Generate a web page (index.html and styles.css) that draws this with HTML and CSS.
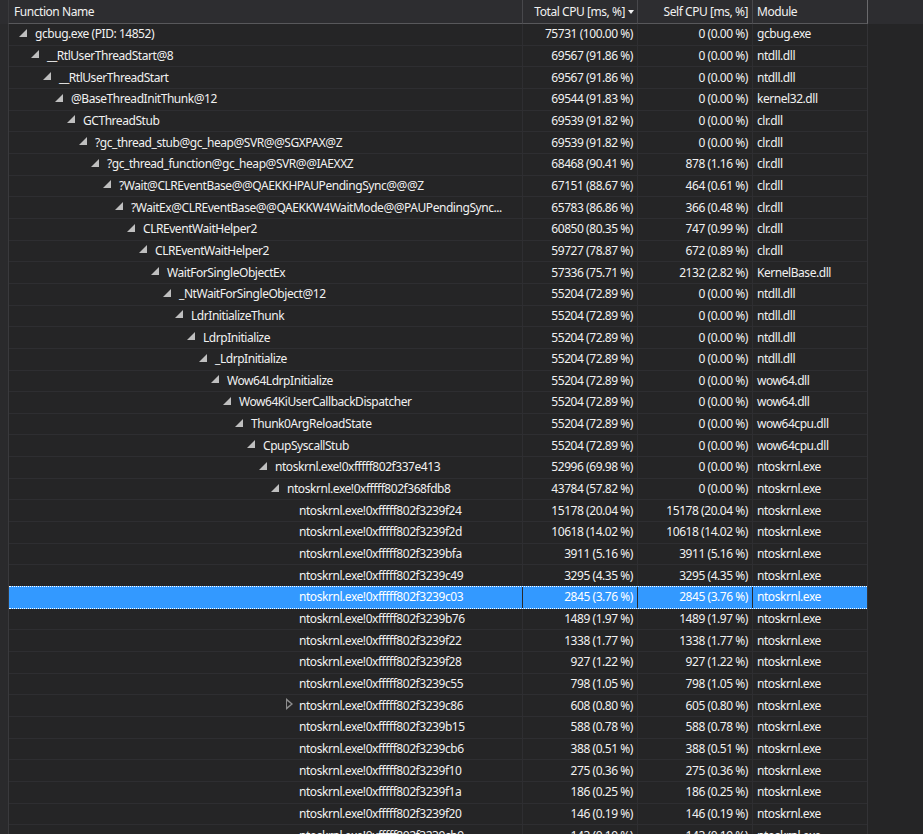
FILE: index.html
```html
<!DOCTYPE html>
<html lang="en">
<head>
<meta charset="utf-8">
<title>CPU Usage</title>
<link rel="stylesheet" href="styles.css">
</head>
<body>
<div class="view">
  <div class="header">
    <div class="hcell h-fn">Function Name</div>
    <div class="hcell h-num h-sorted">Total CPU [ms, %]<span class="sort-arrow"></span></div>
    <div class="hcell h-num">Self CPU [ms, %]</div>
    <div class="hcell h-mod">Module</div>
    <div class="hfill"></div>
  </div>
  <div class="body">
    <div class="gutter"></div>
    <div class="rows">
      <div class="row"><div class="cell fn" style="--d:0"><span class="tg open"></span><span class="name">gcbug.exe (PID: 14852)</span></div><div class="cell num">75731 (100.00 %)</div><div class="cell num">0 (0.00 %)</div><div class="cell mod">gcbug.exe</div></div>
      <div class="row"><div class="cell fn" style="--d:1"><span class="tg open"></span><span class="name">__RtlUserThreadStart@8</span></div><div class="cell num">69567 (91.86 %)</div><div class="cell num">0 (0.00 %)</div><div class="cell mod">ntdll.dll</div></div>
      <div class="row"><div class="cell fn" style="--d:2"><span class="tg open"></span><span class="name">__RtlUserThreadStart</span></div><div class="cell num">69567 (91.86 %)</div><div class="cell num">0 (0.00 %)</div><div class="cell mod">ntdll.dll</div></div>
      <div class="row"><div class="cell fn" style="--d:3"><span class="tg open"></span><span class="name">@BaseThreadInitThunk@12</span></div><div class="cell num">69544 (91.83 %)</div><div class="cell num">0 (0.00 %)</div><div class="cell mod">kernel32.dll</div></div>
      <div class="row"><div class="cell fn" style="--d:4"><span class="tg open"></span><span class="name">GCThreadStub</span></div><div class="cell num">69539 (91.82 %)</div><div class="cell num">0 (0.00 %)</div><div class="cell mod">clr.dll</div></div>
      <div class="row"><div class="cell fn" style="--d:5"><span class="tg open"></span><span class="name">?gc_thread_stub@gc_heap@SVR@@SGXPAX@Z</span></div><div class="cell num">69539 (91.82 %)</div><div class="cell num">0 (0.00 %)</div><div class="cell mod">clr.dll</div></div>
      <div class="row"><div class="cell fn" style="--d:6"><span class="tg open"></span><span class="name">?gc_thread_function@gc_heap@SVR@@IAEXXZ</span></div><div class="cell num">68468 (90.41 %)</div><div class="cell num">878 (1.16 %)</div><div class="cell mod">clr.dll</div></div>
      <div class="row"><div class="cell fn" style="--d:7"><span class="tg open"></span><span class="name">?Wait@CLREventBase@@QAEKKHPAUPendingSync@@@Z</span></div><div class="cell num">67151 (88.67 %)</div><div class="cell num">464 (0.61 %)</div><div class="cell mod">clr.dll</div></div>
      <div class="row"><div class="cell fn" style="--d:8"><span class="tg open"></span><span class="name">?WaitEx@CLREventBase@@QAEKKW4WaitMode@@PAUPendingSync...</span></div><div class="cell num">65783 (86.86 %)</div><div class="cell num">366 (0.48 %)</div><div class="cell mod">clr.dll</div></div>
      <div class="row"><div class="cell fn" style="--d:9"><span class="tg open"></span><span class="name">CLREventWaitHelper2</span></div><div class="cell num">60850 (80.35 %)</div><div class="cell num">747 (0.99 %)</div><div class="cell mod">clr.dll</div></div>
      <div class="row"><div class="cell fn" style="--d:10"><span class="tg open"></span><span class="name">CLREventWaitHelper2</span></div><div class="cell num">59727 (78.87 %)</div><div class="cell num">672 (0.89 %)</div><div class="cell mod">clr.dll</div></div>
      <div class="row"><div class="cell fn" style="--d:11"><span class="tg open"></span><span class="name">WaitForSingleObjectEx</span></div><div class="cell num">57336 (75.71 %)</div><div class="cell num">2132 (2.82 %)</div><div class="cell mod">KernelBase.dll</div></div>
      <div class="row"><div class="cell fn" style="--d:12"><span class="tg open"></span><span class="name">_NtWaitForSingleObject@12</span></div><div class="cell num">55204 (72.89 %)</div><div class="cell num">0 (0.00 %)</div><div class="cell mod">ntdll.dll</div></div>
      <div class="row"><div class="cell fn" style="--d:13"><span class="tg open"></span><span class="name">LdrInitializeThunk</span></div><div class="cell num">55204 (72.89 %)</div><div class="cell num">0 (0.00 %)</div><div class="cell mod">ntdll.dll</div></div>
      <div class="row"><div class="cell fn" style="--d:14"><span class="tg open"></span><span class="name">LdrpInitialize</span></div><div class="cell num">55204 (72.89 %)</div><div class="cell num">0 (0.00 %)</div><div class="cell mod">ntdll.dll</div></div>
      <div class="row"><div class="cell fn" style="--d:15"><span class="tg open"></span><span class="name">_LdrpInitialize</span></div><div class="cell num">55204 (72.89 %)</div><div class="cell num">0 (0.00 %)</div><div class="cell mod">ntdll.dll</div></div>
      <div class="row"><div class="cell fn" style="--d:16"><span class="tg open"></span><span class="name">Wow64LdrpInitialize</span></div><div class="cell num">55204 (72.89 %)</div><div class="cell num">0 (0.00 %)</div><div class="cell mod">wow64.dll</div></div>
      <div class="row"><div class="cell fn" style="--d:17"><span class="tg open"></span><span class="name">Wow64KiUserCallbackDispatcher</span></div><div class="cell num">55204 (72.89 %)</div><div class="cell num">0 (0.00 %)</div><div class="cell mod">wow64.dll</div></div>
      <div class="row"><div class="cell fn" style="--d:18"><span class="tg open"></span><span class="name">Thunk0ArgReloadState</span></div><div class="cell num">55204 (72.89 %)</div><div class="cell num">0 (0.00 %)</div><div class="cell mod">wow64cpu.dll</div></div>
      <div class="row"><div class="cell fn" style="--d:19"><span class="tg open"></span><span class="name">CpupSyscallStub</span></div><div class="cell num">55204 (72.89 %)</div><div class="cell num">0 (0.00 %)</div><div class="cell mod">wow64cpu.dll</div></div>
      <div class="row"><div class="cell fn" style="--d:20"><span class="tg open"></span><span class="name">ntoskrnl.exe!0xfffff802f337e413</span></div><div class="cell num">52996 (69.98 %)</div><div class="cell num">0 (0.00 %)</div><div class="cell mod">ntoskrnl.exe</div></div>
      <div class="row"><div class="cell fn" style="--d:21"><span class="tg open"></span><span class="name">ntoskrnl.exe!0xfffff802f368fdb8</span></div><div class="cell num">43784 (57.82 %)</div><div class="cell num">0 (0.00 %)</div><div class="cell mod">ntoskrnl.exe</div></div>
      <div class="row"><div class="cell fn" style="--d:22"><span class="tg"></span><span class="name">ntoskrnl.exe!0xfffff802f3239f24</span></div><div class="cell num">15178 (20.04 %)</div><div class="cell num">15178 (20.04 %)</div><div class="cell mod">ntoskrnl.exe</div></div>
      <div class="row"><div class="cell fn" style="--d:22"><span class="tg"></span><span class="name">ntoskrnl.exe!0xfffff802f3239f2d</span></div><div class="cell num">10618 (14.02 %)</div><div class="cell num">10618 (14.02 %)</div><div class="cell mod">ntoskrnl.exe</div></div>
      <div class="row"><div class="cell fn" style="--d:22"><span class="tg"></span><span class="name">ntoskrnl.exe!0xfffff802f3239bfa</span></div><div class="cell num">3911 (5.16 %)</div><div class="cell num">3911 (5.16 %)</div><div class="cell mod">ntoskrnl.exe</div></div>
      <div class="row"><div class="cell fn" style="--d:22"><span class="tg"></span><span class="name">ntoskrnl.exe!0xfffff802f3239c49</span></div><div class="cell num">3295 (4.35 %)</div><div class="cell num">3295 (4.35 %)</div><div class="cell mod">ntoskrnl.exe</div></div>
      <div class="row selected"><div class="cell fn" style="--d:22"><span class="tg"></span><span class="name">ntoskrnl.exe!0xfffff802f3239c03</span></div><div class="cell num">2845 (3.76 %)</div><div class="cell num">2845 (3.76 %)</div><div class="cell mod">ntoskrnl.exe</div></div>
      <div class="row"><div class="cell fn" style="--d:22"><span class="tg"></span><span class="name">ntoskrnl.exe!0xfffff802f3239b76</span></div><div class="cell num">1489 (1.97 %)</div><div class="cell num">1489 (1.97 %)</div><div class="cell mod">ntoskrnl.exe</div></div>
      <div class="row"><div class="cell fn" style="--d:22"><span class="tg"></span><span class="name">ntoskrnl.exe!0xfffff802f3239f22</span></div><div class="cell num">1338 (1.77 %)</div><div class="cell num">1338 (1.77 %)</div><div class="cell mod">ntoskrnl.exe</div></div>
      <div class="row"><div class="cell fn" style="--d:22"><span class="tg"></span><span class="name">ntoskrnl.exe!0xfffff802f3239f28</span></div><div class="cell num">927 (1.22 %)</div><div class="cell num">927 (1.22 %)</div><div class="cell mod">ntoskrnl.exe</div></div>
      <div class="row"><div class="cell fn" style="--d:22"><span class="tg"></span><span class="name">ntoskrnl.exe!0xfffff802f3239c55</span></div><div class="cell num">798 (1.05 %)</div><div class="cell num">798 (1.05 %)</div><div class="cell mod">ntoskrnl.exe</div></div>
      <div class="row"><div class="cell fn" style="--d:22"><span class="tg closed"></span><span class="name">ntoskrnl.exe!0xfffff802f3239c86</span></div><div class="cell num">608 (0.80 %)</div><div class="cell num">605 (0.80 %)</div><div class="cell mod">ntoskrnl.exe</div></div>
      <div class="row"><div class="cell fn" style="--d:22"><span class="tg"></span><span class="name">ntoskrnl.exe!0xfffff802f3239b15</span></div><div class="cell num">588 (0.78 %)</div><div class="cell num">588 (0.78 %)</div><div class="cell mod">ntoskrnl.exe</div></div>
      <div class="row"><div class="cell fn" style="--d:22"><span class="tg"></span><span class="name">ntoskrnl.exe!0xfffff802f3239cb6</span></div><div class="cell num">388 (0.51 %)</div><div class="cell num">388 (0.51 %)</div><div class="cell mod">ntoskrnl.exe</div></div>
      <div class="row"><div class="cell fn" style="--d:22"><span class="tg"></span><span class="name">ntoskrnl.exe!0xfffff802f3239f10</span></div><div class="cell num">275 (0.36 %)</div><div class="cell num">275 (0.36 %)</div><div class="cell mod">ntoskrnl.exe</div></div>
      <div class="row"><div class="cell fn" style="--d:22"><span class="tg"></span><span class="name">ntoskrnl.exe!0xfffff802f3239f1a</span></div><div class="cell num">186 (0.25 %)</div><div class="cell num">186 (0.25 %)</div><div class="cell mod">ntoskrnl.exe</div></div>
      <div class="row"><div class="cell fn" style="--d:22"><span class="tg"></span><span class="name">ntoskrnl.exe!0xfffff802f3239f20</span></div><div class="cell num">146 (0.19 %)</div><div class="cell num">146 (0.19 %)</div><div class="cell mod">ntoskrnl.exe</div></div>
      <div class="row"><div class="cell fn" style="--d:22"><span class="tg"></span><span class="name">ntoskrnl.exe!0xfffff802f3239cb9</span></div><div class="cell num">143 (0.19 %)</div><div class="cell num">143 (0.19 %)</div><div class="cell mod">ntoskrnl.exe</div></div>
    </div>
  </div>
</div>
</body>
</html>
```

FILE: styles.css
```css
* { box-sizing: border-box; }

html, body {
  margin: 0;
  padding: 0;
  width: 923px;
  height: 834px;
  overflow: hidden;
  background: #252526;
}

.view {
  width: 923px;
  height: 834px;
  overflow: hidden;
  display: flex;
  flex-direction: column;
  font-family: "Noto Sans", "Open Sans", "DejaVu Sans", sans-serif;
  font-size: 12px;
  letter-spacing: -0.45px;
  color: #f1f1f1;
}

/* ---------- header ---------- */
.header {
  display: flex;
  height: 24px;
  flex: 0 0 24px;
  background: #2d2d30;
  padding-left: 8px;
}

.hcell {
  display: flex;
  align-items: center;
  height: 24px;
  border-bottom: 1px solid #58585b;
  border-right: 1px solid #48484c;
  white-space: nowrap;
}

.h-fn {
  width: 515px;
  padding-left: 5px;
  border-left: 1px solid #3a3a3d;
}

.h-num {
  width: 115px;
  justify-content: flex-end;
  padding-right: 4px;
}

.h-sorted {
  padding-right: 3px;
}

.sort-arrow {
  width: 0;
  height: 0;
  margin-left: 3px;
  border-left: 3.5px solid transparent;
  border-right: 3.5px solid transparent;
  border-top: 4px solid #f1f1f1;
}

.h-mod {
  width: 115px;
  padding-left: 4px;
  border-right-color: #6a6a6d;
}

.hfill {
  flex: 1;
}

/* ---------- body ---------- */
.body {
  display: flex;
  flex: 1;
  min-height: 0;
}

.gutter {
  width: 9px;
  flex: 0 0 9px;
  background: #2a2a2c;
  border-right: 1px solid #3a3a3d;
}

.rows {
  display: flex;
  flex-direction: column;
  width: 859px;
  flex: 0 0 859px;
  border-right: 1px solid #333336;
}

.row {
  display: grid;
  grid-template-columns: 514px 115px 115px 115px;
  height: 21.67px;
  flex: 0 0 21.67px;
  border-bottom: 1px solid #2e2e31;
}

.cell {
  display: flex;
  align-items: center;
  white-space: nowrap;
  overflow: hidden;
  border-right: 1px solid #2e2e31;
  padding-bottom: 1px;
}

.cell:last-child {
  border-right: none;
}

.fn {
  padding-left: calc(10px + var(--d) * 12px);
}

.num {
  justify-content: flex-end;
  padding-right: 4px;
}

.mod {
  padding-left: 4px;
}

.name {
  white-space: nowrap;
}

/* tree toggles */
.tg {
  flex: 0 0 16px;
  width: 16px;
  height: 12px;
  position: relative;
}

.tg.open::before {
  content: "";
  position: absolute;
  left: 0;
  top: 1px;
  width: 0;
  height: 0;
  border-bottom: 8px solid #bfbfbf;
  border-left: 8px solid transparent;
}

.tg.closed::before {
  content: "";
  position: absolute;
  left: 3px;
  top: -1px;
  width: 0;
  height: 0;
  border-top: 6px solid transparent;
  border-bottom: 6px solid transparent;
  border-left: 7px solid #8e8e8e;
}

.tg.closed::after {
  content: "";
  position: absolute;
  left: 4px;
  top: 1.5px;
  width: 0;
  height: 0;
  border-top: 3.5px solid transparent;
  border-bottom: 3.5px solid transparent;
  border-left: 4px solid #252526;
}

/* selection */
.row.selected {
  background: #3399ff;
  border-top: 1px dotted #ffffff;
  border-bottom: 1px dotted #ffffff;
  margin-top: -1px;
  height: 22.67px;
  flex-basis: 22.67px;
}

.row.selected .cell {
  border-right-color: #2a2a2c;
  color: #ffffff;
}
```
